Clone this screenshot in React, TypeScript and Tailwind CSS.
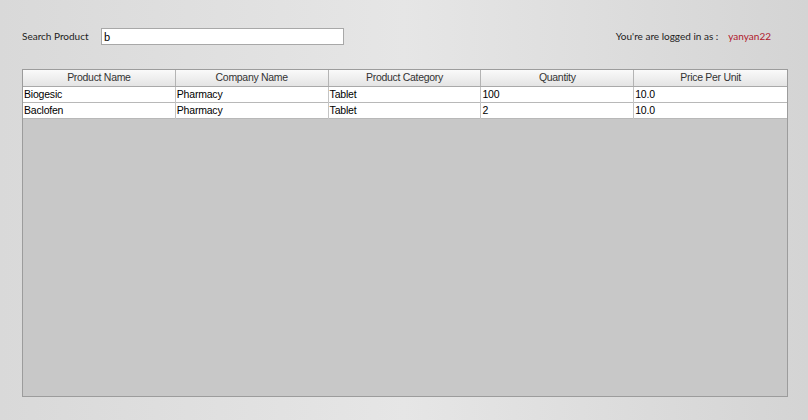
const columns = ["Product Name", "Company Name", "Product Category", "Quantity", "Price Per Unit"];

const rows = [
  ["Biogesic", "Pharmacy", "Tablet", "100", "10.0"],
  ["Baclofen", "Pharmacy", "Tablet", "2", "10.0"],
];

export default function App() {
  return (
    <div className="w-[808px] h-[420px] overflow-hidden bg-linear-to-r from-[#d9d9d9] via-[#e6e6e6] to-[#d4d4d4] pl-[22px] pr-[20px] pt-[28px] font-['Liberation_Sans',sans-serif]">
      <div className="flex items-center h-[17px]">
        <span className="w-[79px] shrink-0 text-[10px] text-[#222] font-['Lato',sans-serif]">Search Product</span>
        <input
          readOnly
          value="b"
          className="w-[243px] h-[17px] bg-white border border-[#a8a8a8] px-[2px] text-[11px] text-black outline-none font-['Lato',sans-serif]"
        />
        <div className="ml-auto mr-[17px] text-[10px] font-['Lato',sans-serif]">
          <span className="text-[#222]">You're are logged in as :</span>
          <span className="ml-[10px] text-[#b0182c]">yanyan22</span>
        </div>
      </div>

      <div className="mt-[24px] h-[328px] border border-[#9c9c9c] bg-[#c8c8c8]">
        <div className="grid grid-cols-5 h-[17px] border-b border-[#a9a9a9] bg-linear-to-b from-[#fafafa] to-[#e4e4e4]">
          {columns.map((c, i) => (
            <div
              key={c}
              className={`flex items-center justify-center text-[10.5px] tracking-[-0.3px] text-[#333] ${i < 4 ? "border-r border-[#b4b4b4]" : ""}`}
            >
              {c}
            </div>
          ))}
        </div>
        {rows.map((r) => (
          <div key={r[0]} className="grid grid-cols-5 h-[16px] bg-white border-b border-[#b8b8b8]">
            {r.map((v, i) => (
              <div
                key={i}
                className={`flex items-center px-[1px] text-[10.5px] tracking-[-0.2px] text-black ${i < 4 ? "border-r border-[#c4c4c4]" : ""}`}
              >
                {v}
              </div>
            ))}
          </div>
        ))}
      </div>
    </div>
  );
}
